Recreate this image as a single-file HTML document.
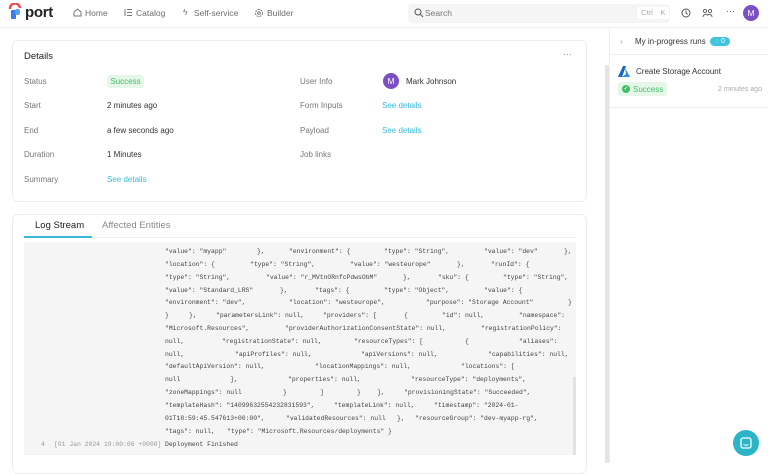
<!DOCTYPE html>
<html><head><meta charset="utf-8"><style>
*{box-sizing:border-box;margin:0;padding:0}
body{width:768px;height:463px;overflow:hidden;background:#fff;font-family:"Liberation Sans",sans-serif;color:#333;position:relative}
.a{position:absolute;white-space:nowrap}
.nav{position:absolute;left:0;top:0;width:768px;height:28px;border-bottom:1px solid #f0f0f0;background:#fff}
.ni{font-size:8.5px;color:#6b6b6b}
.card{position:absolute;border:1px solid #ececec;border-radius:6px;background:#fff}
.lbl{font-size:8px;color:#777}
.val{font-size:8px;color:#333}
.lnk{font-size:8px;color:#35b9d6}
.log{position:absolute;left:24px;top:242px;width:552px;height:213px;background:#f5f5f5;overflow:hidden}
.log span{position:absolute;white-space:pre;font-family:"Liberation Mono",monospace;font-size:6.4px;color:#444}
</style></head><body>
<div class="nav">
 <svg class="a" style="left:8px;top:3px" width="14" height="17" viewBox="0 0 14 17"><path d="M2 6 A5 5 0 0 1 12 5" stroke="#f04a4a" stroke-width="2.4" fill="none"/><rect x="3" y="7" width="5" height="9" rx="1" fill="#3d7bf0"/><rect x="7" y="6" width="5" height="6" rx="2" fill="#5aa0f5"/></svg>
 <div class="a" style="left:25px;top:4px;font-size:15px;font-weight:bold;color:#222;letter-spacing:-0.3px">port</div>
 <svg class="a" style="left:73px;top:8px" width="9" height="9" viewBox="0 0 9 9"><path d="M1 4L4.5 1L8 4V8H1Z" stroke="#777" fill="none"/></svg>
 <div class="a ni" style="left:85px;top:8px">Home</div>
 <svg class="a" style="left:124px;top:8px" width="9" height="9" viewBox="0 0 9 9"><path d="M1 1V8M3 1.5H8M3 4.5H8M3 7.5H8" stroke="#777"/></svg>
 <div class="a ni" style="left:136px;top:8px">Catalog</div>
 <div class="a ni" style="left:183px;top:7px">ϟ</div>
 <div class="a ni" style="left:194px;top:8px">Self-service</div>
 <svg class="a" style="left:254px;top:8px" width="10" height="10" viewBox="0 0 10 10"><circle cx="5" cy="5" r="3.5" stroke="#777" fill="none" stroke-dasharray="2 1"/><circle cx="5" cy="5" r="1.3" stroke="#777" fill="none"/></svg>
 <div class="a ni" style="left:267px;top:8px">Builder</div>
 <div class="a" style="left:408px;top:4px;width:262px;height:19px;background:#f5f5f5;border-radius:4px"></div>
 <svg class="a" style="left:414px;top:8px" width="10" height="10" viewBox="0 0 10 10"><circle cx="4" cy="4" r="3" stroke="#555" fill="none"/><path d="M6.3 6.3L9 9" stroke="#555"/></svg>
 <div class="a ni" style="left:425px;top:8px;color:#777">Search</div>
 <div class="a" style="left:637px;top:7px;width:20px;height:12px;background:#fff;border-radius:2px;font-size:7.5px;color:#aaa;text-align:center;line-height:12px">Ctrl</div>
 <div class="a" style="left:657px;top:7px;width:12px;height:12px;background:#fff;border-radius:2px;font-size:7.5px;color:#aaa;text-align:center;line-height:12px">K</div>
 <svg class="a" style="left:681px;top:8px" width="10" height="10" viewBox="0 0 10 10"><circle cx="5" cy="5" r="4" stroke="#555" fill="none"/><path d="M5 2.5V5L6.5 6.5" stroke="#555" fill="none"/></svg>
 <svg class="a" style="left:702px;top:8px" width="11" height="10" viewBox="0 0 11 10"><circle cx="3" cy="3" r="1.6" stroke="#666" fill="none"/><circle cx="8" cy="3" r="1.6" stroke="#666" fill="none"/><path d="M1 9C1 6 5 6 5.5 7C6 6 10 6 10 9" stroke="#666" fill="none"/></svg>
 <div class="a" style="left:726px;top:6px;font-size:9px;color:#555">···</div>
 <div class="a" style="left:743px;top:5px;width:16px;height:16px;border-radius:50%;background:#7c4fc4;color:#fff;font-size:8.5px;text-align:center;line-height:16px">M</div>
</div>

<div class="card" style="left:12px;top:40px;width:575px;height:162px"></div>
<div class="a" style="left:24px;top:51px;font-size:9.5px;color:#222">Details</div>
<div class="a" style="left:563px;top:49px;font-size:9px;color:#888">···</div>
<div class="a lbl" style="left:24px;top:77px">Status</div>
<div class="a" style="left:107px;top:75px;width:37px;height:13px;background:#e6f7ea;border-radius:3px;color:#3fbf62;font-size:8px;text-align:center;line-height:13px">Success</div>
<div class="a lbl" style="left:24px;top:101px">Start</div><div class="a val" style="left:107px;top:101px">2 minutes ago</div>
<div class="a lbl" style="left:24px;top:126px">End</div><div class="a val" style="left:107px;top:126px">a few seconds ago</div>
<div class="a lbl" style="left:24px;top:150px">Duration</div><div class="a val" style="left:107px;top:150px">1 Minutes</div>
<div class="a lbl" style="left:24px;top:175px">Summary</div><div class="a lnk" style="left:107px;top:175px">See details</div>
<div class="a lbl" style="left:300px;top:77px">User Info</div>
<div class="a" style="left:383px;top:73px;width:16px;height:16px;border-radius:50%;background:#7c4fc4;color:#fff;font-size:8.5px;text-align:center;line-height:16px">M</div>
<div class="a val" style="left:406px;top:77px">Mark Johnson</div>
<div class="a lbl" style="left:300px;top:101px">Form Inputs</div><div class="a lnk" style="left:382px;top:101px">See details</div>
<div class="a lbl" style="left:300px;top:126px">Payload</div><div class="a lnk" style="left:382px;top:126px">See details</div>
<div class="a lbl" style="left:300px;top:150px">Job links</div>

<div class="card" style="left:12px;top:214px;width:575px;height:260px"></div>
<div class="a" style="left:35px;top:220px;font-size:9.5px;color:#222">Log Stream</div>
<div class="a" style="left:102px;top:220px;font-size:9.5px;color:#888">Affected Entities</div>
<div class="a" style="left:24px;top:236px;width:68px;height:1.5px;background:#35b9d6"></div>
<div class="a" style="left:92px;top:237px;width:484px;height:1px;background:#eee"></div>
<div class="log">
<span style="left:141px;top:6px">"value": "myapp"</span><span style="left:233px;top:6px">},</span><span style="left:265px;top:6px">"environment": {</span><span style="left:360px;top:6px">"type": "String",</span><span style="left:460px;top:6px">"value": "dev"</span><span style="left:540px;top:6px">},</span>
<span style="left:141px;top:19px">"location": {</span><span style="left:226px;top:19px">"type": "String",</span><span style="left:326px;top:19px">"value": "westeurope"</span><span style="left:433px;top:19px">},</span><span style="left:467px;top:19px">"runId": {</span>
<span style="left:141px;top:32px">"type": "String",</span><span style="left:242px;top:32px">"value": "r_MVtnORnfcPdwsObM"</span><span style="left:379px;top:32px">},</span><span style="left:414px;top:32px">"sku": {</span><span style="left:479px;top:32px">"type": "String",</span>
<span style="left:141px;top:45px">"value": "Standard_LRS"</span><span style="left:256px;top:45px">},</span><span style="left:291px;top:45px">"tags": {</span><span style="left:360px;top:45px">"type": "Object",</span><span style="left:460px;top:45px">"value": {</span>
<span style="left:141px;top:57px">"environment": "dev",</span><span style="left:265px;top:57px">"location": "westeurope",</span><span style="left:402px;top:57px">"purpose": "Storage Account"</span><span style="left:544px;top:57px">}</span>
<span style="left:141px;top:70px">}</span><span style="left:165px;top:70px">},</span><span style="left:192px;top:70px">"parametersLink": null,</span><span style="left:299px;top:70px">"providers": [</span><span style="left:380px;top:70px">{</span><span style="left:418px;top:70px">"id": null,</span><span style="left:495px;top:70px">"namespace":</span>
<span style="left:141px;top:83px">"Microsoft.Resources",</span><span style="left:261px;top:83px">"providerAuthorizationConsentState": null,</span><span style="left:457px;top:83px">"registrationPolicy":</span>
<span style="left:141px;top:96px">null,</span><span style="left:198px;top:96px">"registrationState": null,</span><span style="left:330px;top:96px">"resourceTypes": [</span><span style="left:441px;top:96px">{</span><span style="left:495px;top:96px">"aliases":</span>
<span style="left:141px;top:109px">null,</span><span style="left:211px;top:109px">"apiProfiles": null,</span><span style="left:337px;top:109px">"apiVersions": null,</span><span style="left:464px;top:109px">"capabilities": null,</span>
<span style="left:141px;top:121px">"defaultApiVersion": null,</span><span style="left:291px;top:121px">"locationMappings": null,</span><span style="left:437px;top:121px">"locations": [</span>
<span style="left:141px;top:134px">null</span><span style="left:206px;top:134px">],</span><span style="left:264px;top:134px">"properties": null,</span><span style="left:387px;top:134px">"resourceType": "deployments",</span>
<span style="left:141px;top:147px">"zoneMappings": null</span><span style="left:259px;top:147px">}</span><span style="left:296px;top:147px">]</span><span style="left:333px;top:147px">}</span><span style="left:353px;top:147px">],</span><span style="left:380px;top:147px">"provisioningState": "Succeeded",</span>
<span style="left:141px;top:160px">"templateHash": "14099632554232831593",</span><span style="left:310px;top:160px">"templateLink": null,</span><span style="left:410px;top:160px">"timestamp": "2024-01-</span>
<span style="left:141px;top:173px">01T18:59:45.547613+00:00",</span><span style="left:262px;top:173px">"validatedResources": null</span><span style="left:373px;top:173px">},</span><span style="left:391px;top:173px">"resourceGroup": "dev-myapp-rg",</span>
<span style="left:141px;top:186px">"tags": null,</span><span style="left:203px;top:186px">"type": "Microsoft.Resources/deployments"</span><span style="left:364px;top:186px">}</span>
<span style="left:17px;top:199px;color:#999">4</span><span style="left:30px;top:199px;color:#999">[01 Jan 2024 19:00:06 +0000]</span><span style="left:141px;top:199px">Deployment Finished</span>
<div style="position:absolute;left:549px;top:135px;width:3px;height:78px;background:#e2e2e2"></div>
</div>

<div class="a" style="left:605px;top:65px;width:4px;height:398px;background:#e4e4e4"></div>
<div class="a" style="left:609px;top:28px;width:1px;height:435px;background:#eee"></div>
<div class="a" style="left:620px;top:37px;font-size:8px;color:#999">›</div>
<div class="a" style="left:635px;top:37px;font-size:8px;color:#333">My in-progress runs</div>
<div class="a" style="left:710px;top:37px;width:20px;height:9px;background:#3ec4dc;border-radius:5px;color:#fff;font-size:7px;line-height:9px;text-align:center">◌ 0</div>
<div class="a" style="left:610px;top:54px;width:158px;height:1px;background:#eee"></div>
<svg class="a" style="left:618px;top:66px" width="12" height="11" viewBox="0 0 12 11"><path d="M5 0H8L4 11H0Z" fill="#1466c4"/><path d="M7 2L12 11H4L8 8Z" fill="#2f8be0"/></svg>
<div class="a" style="left:636px;top:67px;font-size:8px;color:#333">Create Storage Account</div>
<div class="a" style="left:618px;top:82px;width:49px;height:14px;background:#e6f7ea;border-radius:3px"></div>
<div class="a" style="left:622px;top:85px;width:8px;height:8px;border-radius:50%;background:#3fbf62;color:#fff;font-size:6px;line-height:8px;text-align:center">✓</div>
<div class="a" style="left:633px;top:85px;font-size:8px;color:#3fbf62">Success</div>
<div class="a" style="left:718px;top:86px;font-size:7px;color:#aaa">2 minutes ago</div>
<div class="a" style="left:610px;top:107px;width:158px;height:1px;background:#eee"></div>
<div class="a" style="left:733px;top:430px;width:26px;height:26px;border-radius:50%;background:#2bb4c6"></div>
<svg class="a" style="left:740px;top:437px" width="12" height="12" viewBox="0 0 12 12"><rect x="1" y="1" width="10" height="10" rx="2" stroke="#fff" fill="none" stroke-width="1.3"/><path d="M3.5 7.5Q6 9 8.5 7.5" stroke="#fff" fill="none"/></svg>
</body></html>
